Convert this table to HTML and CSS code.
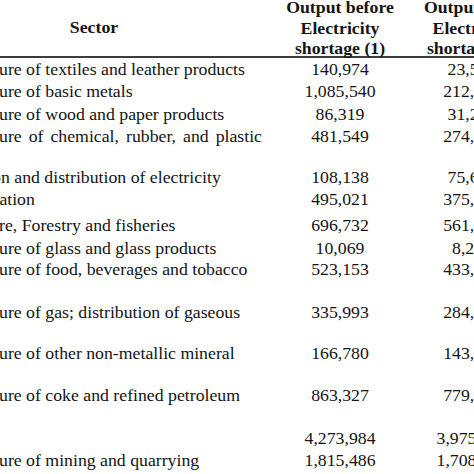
FILE: index.html
```html
<!DOCTYPE html>
<html>
<head>
<meta charset="utf-8">
<link rel="stylesheet" href="styles.css">
</head>
<body>
<div class="sheet">
  <div class="row head">
    <div class="c1 hcell sector">Sector</div>
    <div class="c2 hcell">Output before<br>Electricity<br>shortage (1)</div>
    <div class="c3 hcell">Output after<br>Electricity<br>shortage (2)</div>
  </div>
  <div class="row h22"><div class="c1">Manufacture of textiles and leather products</div><div class="c2">140,974</div><div class="c3">23,518</div></div>
  <div class="row h23"><div class="c1">Manufacture of basic metals</div><div class="c2">1,085,540</div><div class="c3">212,406</div></div>
  <div class="row h22"><div class="c1">Manufacture of wood and paper products</div><div class="c2">86,319</div><div class="c3">31,227</div></div>
  <div class="row h41"><div class="c1 just">Manufacture of chemical, rubber, and plastic products</div><div class="c2">481,549</div><div class="c3">274,613</div></div>
  <div class="row h22"><div class="c1">Generation and distribution of electricity</div><div class="c2">108,138</div><div class="c3">75,640</div></div>
  <div class="row h26"><div class="c1">Transportation</div><div class="c2">495,021</div><div class="c3">375,102</div></div>
  <div class="row h23"><div class="c1">Agriculture, Forestry and fisheries</div><div class="c2">696,732</div><div class="c3">561,289</div></div>
  <div class="row h21"><div class="c1">Manufacture of glass and glass products</div><div class="c2">10,069</div><div class="c3">8,215</div></div>
  <div class="row h43"><div class="c1">Manufacture of food, beverages and tobacco<br>products</div><div class="c2">523,153</div><div class="c3">433,870</div></div>
  <div class="row h41"><div class="c1">Manufacture of gas; distribution of gaseous<br>fuels</div><div class="c2">335,993</div><div class="c3">284,316</div></div>
  <div class="row h42"><div class="c1">Manufacture of other non-metallic mineral<br>products</div><div class="c2">166,780</div><div class="c3">143,552</div></div>
  <div class="row h43"><div class="c1">Manufacture of coke and refined petroleum<br>products</div><div class="c2">863,327</div><div class="c3">779,043</div></div>
  <div class="row h22"><div class="c1">Total</div><div class="c2">4,273,984</div><div class="c3">3,975,120</div></div>
  <div class="row h24"><div class="c1">Manufacture of mining and quarrying</div><div class="c2">1,815,486</div><div class="c3">1,708,254</div></div>
</div>
</body>
</html>
```

FILE: styles.css
```css
html, body {
  margin: 0;
  padding: 0;
  background: #ffffff;
  overflow: hidden;
}
body {
  width: 474px;
  height: 474px;
}
.sheet {
  margin-top: -3px;
  margin-left: -69px;
  width: 620px;
  font-family: "Liberation Serif", "Times New Roman", serif;
  font-size: 17.75px;
  color: #141414;
  line-height: 22px;
}
.row {
  display: grid;
  grid-template-columns: 331px 156px 108px;
  white-space: nowrap;
}
.head {
  font-weight: bold;
  line-height: 20.5px;
  height: 59px;
  border-bottom: 2px solid #3c3c3c;
  align-items: start;
}
.c1 {
  text-align: left;
}
.c1.just {
  white-space: normal;
  text-align: justify;
}
.c2, .c3 {
  text-align: center;
}
.head .hcell {
  text-align: center;
}
.head .sector {
  align-self: start;
  padding-top: 19.5px;
  padding-right: 5px;
}
.h21 { height: 21px; }
.h22 { height: 22px; }
.h23 { height: 23px; }
.h24 { height: 24px; }
.h26 { height: 26px; }
.h40 { height: 40px; }
.h41 { height: 41px; }
.h42 { height: 42px; }
.h43 { height: 43px; }
```
